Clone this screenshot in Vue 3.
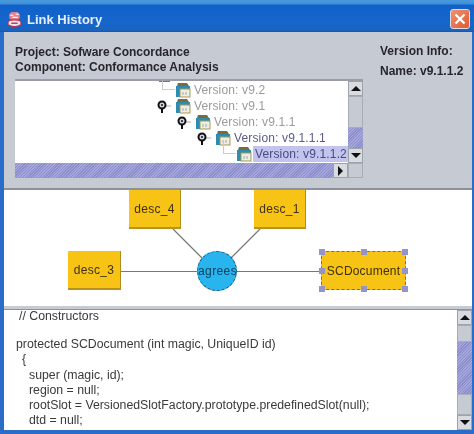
<script setup>
const rows = [
  { label: 'Version: v9.2', indent: 175, pin: false, cls: 'dim', line: true },
  { label: 'Version: v9.1', indent: 175, pin: true, cls: 'dim' },
  { label: 'Version: v9.1.1', indent: 195, pin: true, cls: 'dim' },
  { label: 'Version: v9.1.1.1', indent: 215, pin: true, cls: 'mid' },
  { label: 'Version: v9.1.1.2', indent: 236, pin: false, cls: 'sel', line: true }
]
const code = [
  { t: '// Constructors', i: 15 },
  { t: '\u00a0', i: 0 },
  { t: 'protected SCDocument (int magic, UniqueID id)', i: 12 },
  { t: '{', i: 18 },
  { t: 'super (magic, id);', i: 25 },
  { t: 'region = null;', i: 25 },
  { t: 'rootSlot = VersionedSlotFactory.prototype.predefinedSlot(null);', i: 25 },
  { t: 'dtd = null;', i: 25 }
]
const handles = [
  [0, 0], [50, 0], [100, 0], [0, 50], [100, 50], [0, 100], [50, 100], [100, 100]
]
</script>

<template>
  <div class="window">
    <header class="titlebar">
      <svg class="appicon" viewBox="0 0 16 16" width="17" height="17">
        <path d="M5 1h6l2 2v3l-1 2H4L3 6V3z" fill="#e0808c" />
        <path d="M4 4h3M9 3h3M6 6h5" stroke="#fff" stroke-width="1" fill="none" />
        <path d="M2 10c2-2 10-2 12 0v3c-3 2-9 2-12 0z" fill="#f4e4e8" stroke="#c03050" stroke-width="1" />
        <path d="M5 11.500h6" stroke="#b02848" stroke-width="1.200" />
      </svg>
      <span class="title">Link History</span>
      <span class="close">
        <svg viewBox="0 0 20 20" width="18" height="18">
          <path d="M5 5l10 10M15 5L5 15" stroke="#fff" stroke-width="2.600" />
        </svg>
      </span>
    </header>

    <div class="body">
      <section class="top">
        <div class="topinfo">
          <div class="labels">
            <div>Project: Sofware Concordance</div>
            <div>Component: Conformance Analysis</div>
          </div>
          <div class="tree">
            <div class="treemain">
              <div class="rows">
                <i class="clipdash"></i>
                <div v-for="r in rows" :key="r.label" class="row" :style="{ paddingLeft: r.indent + 'px' }">
                  <svg v-if="r.pin" class="pin" viewBox="0 0 14 14" width="14" height="14">
                    <path d="M9 6h5" stroke="#aaa" stroke-width="1" />
                    <circle cx="5" cy="5" r="3.500" fill="#d8d8e4" stroke="#111" stroke-width="2" />
                    <circle cx="5" cy="5" r="1.100" fill="#222" />
                    <path d="M5 9v4" stroke="#111" stroke-width="2" />
                  </svg>
                  <span v-if="r.line" class="elbow"></span>
                  <svg class="folder" viewBox="0 0 16 16" width="16" height="16">
                    <path d="M3 1h9l2 3H2z" fill="#7a6a40" />
                    <rect x="1" y="4" width="14" height="11" fill="#2d8cb0" />
                    <rect x="5" y="7" width="10" height="8" fill="#f2eedd" stroke="#a89858" stroke-width="1" />
                    <path d="M8 10v3M11 10v3" stroke="#9ab" stroke-width="1" />
                  </svg>
                  <span class="rowlabel" :class="r.cls">{{ r.label }}</span>
                </div>
              </div>
              <div class="hbar">
                <div class="hthumb"></div>
                <div class="btn"><i class="arr right"></i></div>
              </div>
            </div>
            <div class="vbar">
              <div class="btn"><i class="arr up"></i></div>
              <div class="track t1"></div>
              <div class="thumb t2"></div>
              <div class="btn"><i class="arr down"></i></div>
              <div class="corner"></div>
            </div>
          </div>
        </div>
        <aside class="version">
          <div>Version Info:</div>
          <div>Name: v9.1.1.2</div>
        </aside>
      </section>

      <section class="canvas">
        <svg class="wires" width="468" height="116" viewBox="0 0 468 116">
          <path d="M169 39l34 34M256 39l-34 34M115 81.500h90M232 81.500h86" stroke="#777" stroke-width="1.200" fill="none" />
        </svg>
        <div class="node n4">desc_4</div>
        <div class="node n1">desc_1</div>
        <div class="node n3">desc_3</div>
        <div class="circle">agrees</div>
        <div class="node doc">
          SCDocument
          <i v-for="h in handles" :key="h.join()" class="handle" :style="{ left: h[0] + '%', top: h[1] + '%' }"></i>
        </div>
      </section>

      <section class="code">
        <div class="lines">
          <div v-for="(l, n) in code" :key="n" class="line" :style="{ paddingLeft: l.i + 'px' }">{{ l.t }}</div>
        </div>
        <div class="vbar2">
          <div class="btn"><i class="arr up"></i></div>
          <div class="track c1"></div>
          <div class="thumb c2"></div>
          <div class="track c3"></div>
          <div class="btn"><i class="arr down"></i></div>
        </div>
      </section>
    </div>
  </div>
</template>

<style scoped>
.window {
  width: 474px;
  height: 434px;
  overflow: hidden;
  display: flex;
  flex-direction: column;
  font-family: "Liberation Sans", Arial, sans-serif;
  background: #2a6cc8;
  filter: blur(0.35px);
}
.titlebar {
  height: 32px;
  flex: none;
  display: flex;
  align-items: center;
  padding: 6px 4px 0 6px;
  box-sizing: border-box;
  background: linear-gradient(#4a9ade 0, #3d8fd8 4px, #0f60c8 5px, #1666cc 22px, #1a62bc 31px, #1450a8 32px);
}
.appicon { flex: none; }
.title {
  margin-left: 4px;
  color: #e8eefa;
  font-size: 13px;
  font-weight: bold;
  flex: 1;
}
.close {
  width: 20px;
  height: 20px;
  box-sizing: border-box;
  border: 1px solid #d8dde8;
  border-radius: 3px;
  background: linear-gradient(135deg, #f09070, #e05a30);
  display: flex;
  align-items: center;
  justify-content: center;
}
.body {
  flex: 1;
  margin: 0 2px 4px 4px;
  display: flex;
  flex-direction: column;
  background: #c6cad2;
  min-height: 0;
}
.top {
  height: 158px;
  flex: none;
  display: flex;
  box-sizing: border-box;
  padding: 13px 0 0 11px;
  border-bottom: 2px solid #8e9298;
  font-size: 12px;
  font-weight: bold;
  color: #26262c;
}
.topinfo { width: 348px; flex: none; }
.labels { line-height: 15px; margin-bottom: 4px; white-space: nowrap; }
.version {
  margin: -1px 0 0 17px;
  line-height: 15px;
  white-space: nowrap;
}
.version div + div { margin-top: 5px; }
.tree {
  width: 348px;
  height: 99px;
  display: flex;
  border-top: 2px solid #9a9ea4;
  box-sizing: border-box;
  background: #fff;
  font-weight: normal;
}
.treemain {
  width: 333px;
  display: flex;
  flex-direction: column;
}
.rows {
  flex: 1;
  padding-top: 1px;
  margin-left: -15px;
  overflow: hidden;
  position: relative;
}
.clipdash {
  position: absolute;
  left: 159px;
  top: 0;
  width: 11px;
  height: 1px;
  background: #777;
}
.row {
  height: 16px;
  display: flex;
  align-items: center;
  position: relative;
  white-space: nowrap;
}
.pin {
  position: absolute;
  margin-left: -18px;
  top: 2px;
}
.elbow {
  position: absolute;
  margin-left: -13px;
  top: -6px;
  width: 12px;
  height: 13px;
  border-left: 1px solid #ccc;
  border-bottom: 1px solid #ccc;
}
.folder { flex: none; }
.rowlabel {
  margin-left: 3px;
  font-size: 12px;
  line-height: 16px;
  letter-spacing: 0.15px;
}
.dim { color: #9a9a9e; }
.mid { color: #5a5a8c; }
.sel {
  background: #c2c4ee;
  color: #4a4a80;
  padding: 0 1px 0 2px;
  margin-left: 1px;
}
.hbar {
  height: 15px;
  flex: none;
  display: flex;
  background: #c6cad2;
}
.hthumb, .thumb {
  background: repeating-linear-gradient(135deg, #a4a6dc 0 1px, #8c8ecc 1px 2px);
}
.hthumb { flex: 1; }
.vbar, .vbar2 {
  width: 15px;
  flex: none;
  display: flex;
  flex-direction: column;
  background: #c6cad2;
}
.btn {
  width: 15px;
  height: 15px;
  flex: none;
  box-sizing: border-box;
  border: 1px solid #9ea2aa;
  background: #d8dbe0;
  display: flex;
  align-items: center;
  justify-content: center;
}
.arr { width: 0; height: 0; display: block; }
.arr.up { border: 5px solid transparent; border-top: 0; border-bottom: 5px solid #111; }
.arr.down { border: 5px solid transparent; border-bottom: 0; border-top: 5px solid #111; }
.arr.right { border: 5px solid transparent; border-right: 0; border-left: 5px solid #111; }
.track { background: #c6cad2; border: 1px solid #a8acb4; box-sizing: border-box; }
.t1 { height: 32px; flex: none; }
.t2 { height: 20px; flex: none; }
.corner { flex: 1; background: #c6cad2; border: 1px solid #a8acb4; }
.canvas {
  position: relative;
  height: 116px;
  flex: none;
  background: #fff;
  overflow: hidden;
}
.wires { position: absolute; left: 0; top: 0; }
.node {
  position: absolute;
  box-sizing: border-box;
  height: 39px;
  display: flex;
  align-items: center;
  justify-content: center;
  background: #f7c314;
  border-right: 1px solid #b08c18;
  border-bottom: 2px solid #b8921c;
  color: #3e3010;
  font-size: 12px;
  letter-spacing: 0.3px;
}
.n4 { left: 125px; top: 0; width: 52px; }
.n1 { left: 250px; top: 0; width: 52px; }
.n3 { left: 64px; top: 61px; width: 53px; }
.doc {
  left: 317px;
  top: 61px;
  width: 85px;
  border: 1px dashed #8a7020;
  letter-spacing: 0.2px;
}
.circle {
  position: absolute;
  left: 193px;
  top: 61px;
  width: 40px;
  height: 40px;
  border-radius: 50%;
  box-sizing: border-box;
  border: 1px dashed #1a5a88;
  background: #28b4ee;
  color: #13405a;
  font-size: 12px;
  letter-spacing: 0.4px;
  display: flex;
  align-items: center;
  white-space: nowrap;
}
.handle {
  position: absolute;
  width: 6px;
  height: 6px;
  margin: -3px 0 0 -3px;
  background: #9494c8;
}
.code {
  margin-top: 3px;
  flex: 1;
  min-height: 0;
  display: flex;
  background: #fff;
  border-top: 1px solid #8e9298;
  overflow: hidden;
}
.lines {
  flex: 1;
  min-width: 0;
  font-size: 12.300px;
  line-height: 15.200px;
  color: #3a3a3a;
  white-space: nowrap;
}
.line:first-child { line-height: 12px; height: 12px; }
.c1 { height: 17px; flex: none; }
.c2 { height: 52px; flex: none; }
.c3 { flex: 1; }
</style>

<style>
html, body { margin: 0; background: #2a6cc8; }
</style>
